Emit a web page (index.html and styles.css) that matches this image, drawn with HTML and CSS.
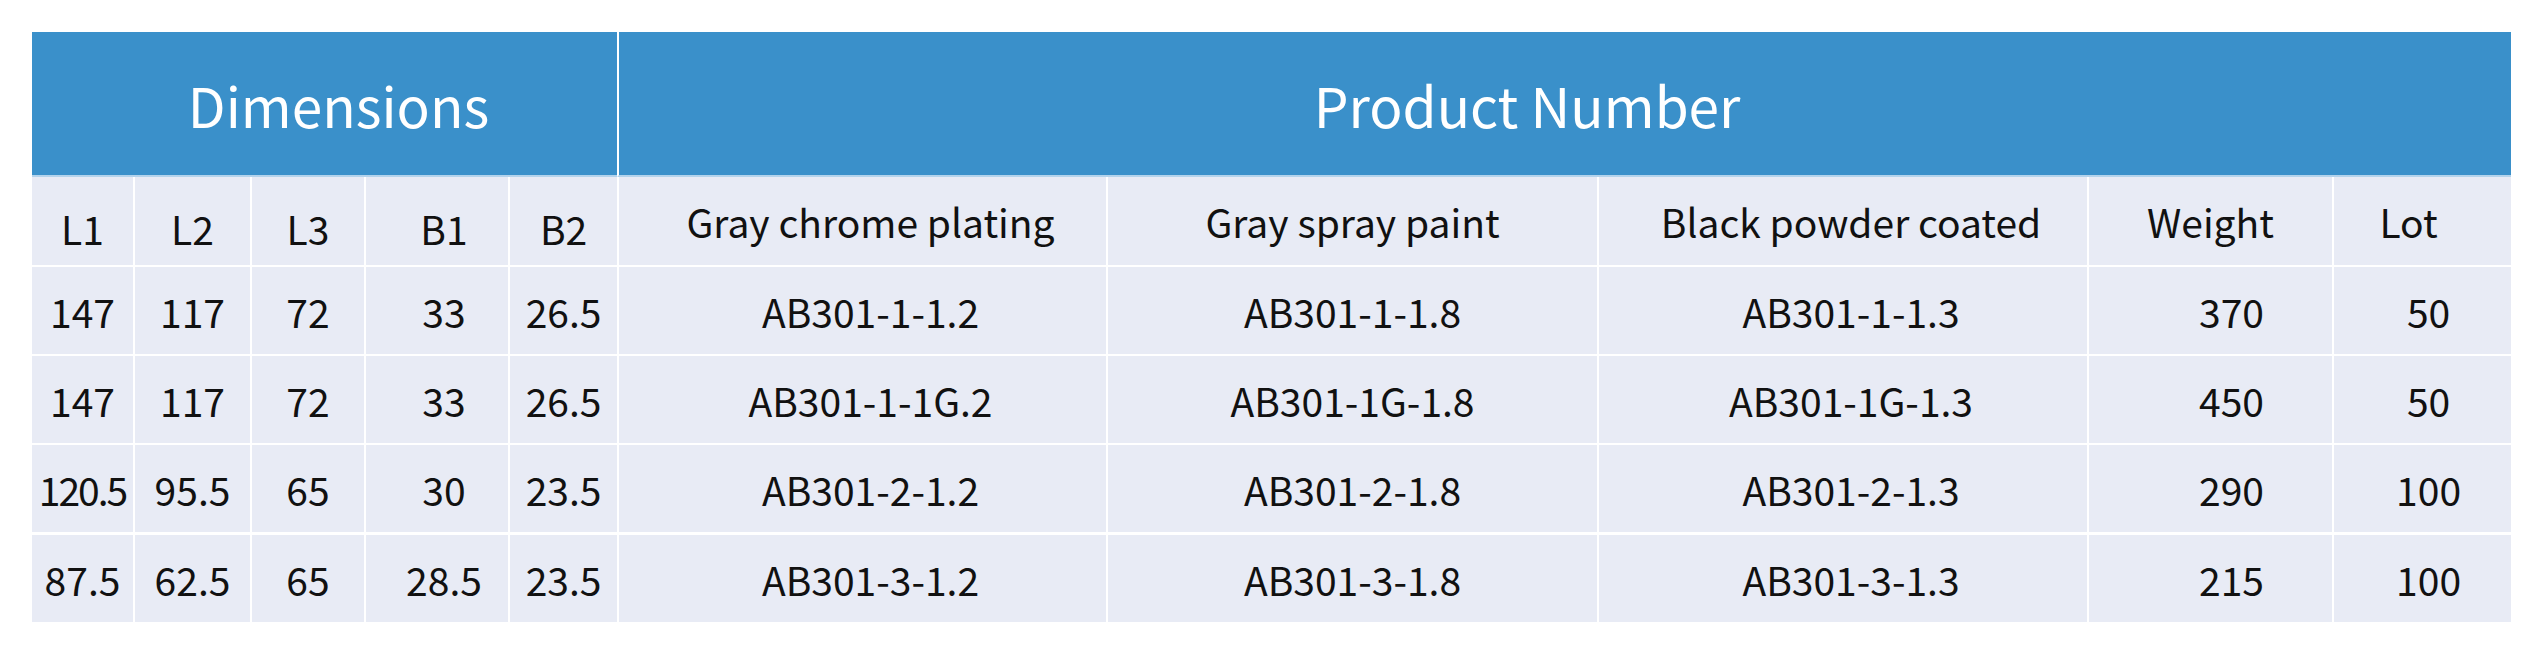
FILE: index.html
```html
<!DOCTYPE html>
<html lang="en">
<head>
<meta charset="utf-8">
<title>Product table</title>
<link rel="stylesheet" href="styles.css">
</head>
<body>
<table class="spec">
  <colgroup>
    <col class="c1"><col class="c2"><col class="c3"><col class="c4"><col class="c5">
    <col class="c6"><col class="c7"><col class="c8"><col class="c9"><col class="c10">
  </colgroup>
  <thead>
    <tr class="band">
      <th colspan="5" class="dim">Dimensions</th>
      <th colspan="5" class="prod">Product Number</th>
    </tr>
  </thead>
  <tbody>
    <tr class="heads">
      <td class="low">L1</td><td class="low">L2</td><td class="low">L3</td><td class="low b1">B1</td><td class="low">B2</td>
      <td class="pc">Gray chrome plating</td><td>Gray spray paint</td><td class="pc">Black powder coated</td><td>Weight</td><td class="lot-h">Lot</td>
    </tr>
    <tr>
      <td>147</td><td>117</td><td>72</td><td class="b1">33</td><td>26.5</td>
      <td class="pc">AB301-1-1.2</td><td>AB301-1-1.8</td><td class="pc">AB301-1-1.3</td><td class="wt">370</td><td class="lot">50</td>
    </tr>
    <tr>
      <td>147</td><td>117</td><td>72</td><td class="b1">33</td><td>26.5</td>
      <td class="pc">AB301-1-1G.2</td><td>AB301-1G-1.8</td><td class="pc">AB301-1G-1.3</td><td class="wt">450</td><td class="lot">50</td>
    </tr>
    <tr>
      <td class="tight">120.5</td><td>95.5</td><td>65</td><td class="b1">30</td><td>23.5</td>
      <td class="pc">AB301-2-1.2</td><td>AB301-2-1.8</td><td class="pc">AB301-2-1.3</td><td class="wt">290</td><td class="lot">100</td>
    </tr>
    <tr class="last">
      <td>87.5</td><td>62.5</td><td>65</td><td class="b1">28.5</td><td>23.5</td>
      <td class="pc">AB301-3-1.2</td><td>AB301-3-1.8</td><td class="pc">AB301-3-1.3</td><td class="wt">215</td><td class="lot">100</td>
    </tr>
  </tbody>
</table>
</body>
</html>
```

FILE: styles.css
```css
html, body {
  margin: 0;
  padding: 0;
  background: #ffffff;
}

body {
  padding: 32px 0 0 32px;
  font-family: "Noto Sans CJK SC", "Noto Sans", sans-serif;
  color: #111111;
}

.spec {
  table-layout: fixed;
  width: 2479px;
  border-collapse: separate;
  border-spacing: 0;
}

.c1 { width: 101px; }
.c2 { width: 117px; }
.c3 { width: 114px; }
.c4 { width: 144px; }
.c5 { width: 109px; }
.c6 { width: 489px; }
.c7 { width: 491px; }
.c8 { width: 490px; }
.c9 { width: 245px; }
.c10 { width: 179px; }

.band th {
  background: #3a90ca;
  color: #ffffff;
  font-weight: 400;
  font-size: 55px;
  height: 145px;
  padding: 0;
  border-bottom: 2px solid #b3d3ec;
  text-align: center;
  vertical-align: middle;
  box-sizing: border-box;
}

.band .dim {
  padding-left: 28px;
}

.band .prod {
  border-left: 2px solid #ffffff;
  padding-right: 76px;
}

tbody td {
  background: #e8ebf5;
  font-size: 39px;
  font-weight: 400;
  text-align: center;
  vertical-align: middle;
  height: 87px;
  padding: 0;
  border-top: 2px solid #ffffff;
  border-left: 2px solid #ffffff;
  white-space: nowrap;
}

tbody td:first-child {
  border-left: 0;
}

tbody .heads td {
  height: 74px;
  border-top: 0;
}

tbody .heads td.low {
  padding-top: 14px;
}

tbody .last td {
  border-top-width: 3px;
}

.b1 { padding-left: 14px; }
.pc { padding-left: 16px; }
.wt { padding-left: 42px; }
.lot { padding-left: 12px; }
.lot-h { padding-right: 28px; }
.tight { letter-spacing: -2px; }
```
